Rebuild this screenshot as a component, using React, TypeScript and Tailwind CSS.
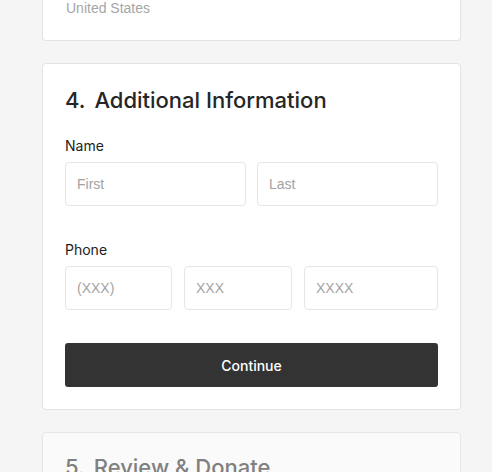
import React from 'react';

const inputCls =
  "h-[44px] rounded-[4px] border border-[#e6e6e6] bg-white px-[11px] text-[14px] text-[#333] placeholder:text-[#a3a3a3] outline-none min-w-0";

export default function App() {
  return (
    <div className="min-h-screen bg-[#f5f5f5] overflow-hidden" style={{ fontFamily: "Inter, 'Noto Sans', sans-serif" }}>
      <div className="w-[419px] ml-[42px] flex flex-col gap-[22px]">
        <div className="bg-white border border-t-0 border-[#e3e3e3] rounded-b-[4px] px-[23px] pb-[24px]">
          <p className="text-[14px] leading-[16px] text-[#a6a6a6]" style={{ fontFamily: "'Liberation Sans', Arial, sans-serif" }}>
            United States
          </p>
        </div>

        <section className="bg-white border border-[#e3e3e3] rounded-[4px] px-[22px] pt-[24px] pb-[22px]">
          <h2 className="text-[22px] leading-[24px] font-medium text-[#262626] flex gap-[9px]">
            <span>4.</span>
            <span>Additional Information</span>
          </h2>

          <label className="block mt-[25px] text-[14px] leading-[18px] text-[#222]">Name</label>
          <div className="mt-[7px] grid grid-cols-2 gap-[11px]" style={{ fontFamily: "'Liberation Sans', Arial, sans-serif" }}>
            <input className={inputCls} placeholder="First" />
            <input className={inputCls} placeholder="Last" />
          </div>

          <label className="block mt-[35px] text-[14px] leading-[18px] text-[#222]">Phone</label>
          <div className="mt-[7px] flex gap-[12px]" style={{ fontFamily: "'Liberation Sans', Arial, sans-serif" }}>
            <input className={`${inputCls} w-[107px]`} placeholder="(XXX)" />
            <input className={`${inputCls} w-[108px]`} placeholder="XXX" />
            <input className={`${inputCls} flex-1`} placeholder="XXXX" />
          </div>

          <button className="mt-[33px] w-full h-[44px] rounded-[3px] bg-[#333333] text-white text-[14px] font-medium">
            Continue
          </button>
        </section>

        <section className="bg-[#fafafa] border border-[#e6e6e6] rounded-[4px] px-[22px] pt-[22px] pb-[22px]">
          <h2 className="text-[22px] leading-[24px] font-medium text-[#808080] flex gap-[9px]">
            <span>5.</span>
            <span>Review &amp; Donate</span>
          </h2>
        </section>
      </div>
    </div>
  );
}
